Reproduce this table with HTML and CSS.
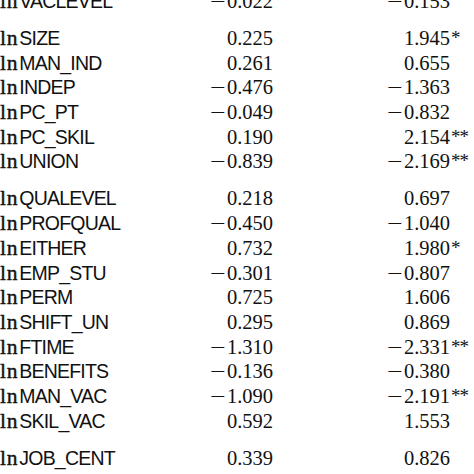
FILE: index.html
```html
<!DOCTYPE html>
<html>
<head>
<meta charset="utf-8">
<link rel="stylesheet" href="styles.css">
</head>
<body>
<div class="table">
  <div class="group first">
    <div class="row"><span class="lab"><span class="ln">ln</span>VACLEVEL</span><span class="num"><span class="m">−</span>0.022</span><span class="num"><span class="m">−</span>0.153</span><span class="st"></span></div>
  </div>
  <div class="group">
    <div class="row"><span class="lab"><span class="ln">ln</span>SIZE</span><span class="num">0.225</span><span class="num">1.945</span><span class="st">*</span></div>
    <div class="row"><span class="lab"><span class="ln">ln</span>MAN_IND</span><span class="num">0.261</span><span class="num">0.655</span><span class="st"></span></div>
    <div class="row"><span class="lab"><span class="ln">ln</span>INDEP</span><span class="num"><span class="m">−</span>0.476</span><span class="num"><span class="m">−</span>1.363</span><span class="st"></span></div>
    <div class="row"><span class="lab"><span class="ln">ln</span>PC_PT</span><span class="num"><span class="m">−</span>0.049</span><span class="num"><span class="m">−</span>0.832</span><span class="st"></span></div>
    <div class="row"><span class="lab"><span class="ln">ln</span>PC_SKIL</span><span class="num">0.190</span><span class="num">2.154</span><span class="st">**</span></div>
    <div class="row"><span class="lab"><span class="ln">ln</span>UNION</span><span class="num"><span class="m">−</span>0.839</span><span class="num"><span class="m">−</span>2.169</span><span class="st">**</span></div>
  </div>
  <div class="group">
    <div class="row"><span class="lab"><span class="ln">ln</span>QUALEVEL</span><span class="num">0.218</span><span class="num">0.697</span><span class="st"></span></div>
    <div class="row"><span class="lab"><span class="ln">ln</span>PROFQUAL</span><span class="num"><span class="m">−</span>0.450</span><span class="num"><span class="m">−</span>1.040</span><span class="st"></span></div>
    <div class="row"><span class="lab"><span class="ln">ln</span>EITHER</span><span class="num">0.732</span><span class="num">1.980</span><span class="st">*</span></div>
    <div class="row"><span class="lab"><span class="ln">ln</span>EMP_STU</span><span class="num"><span class="m">−</span>0.301</span><span class="num"><span class="m">−</span>0.807</span><span class="st"></span></div>
    <div class="row"><span class="lab"><span class="ln">ln</span>PERM</span><span class="num">0.725</span><span class="num">1.606</span><span class="st"></span></div>
    <div class="row"><span class="lab"><span class="ln">ln</span>SHIFT_UN</span><span class="num">0.295</span><span class="num">0.869</span><span class="st"></span></div>
    <div class="row"><span class="lab"><span class="ln">ln</span>FTIME</span><span class="num"><span class="m">−</span>1.310</span><span class="num"><span class="m">−</span>2.331</span><span class="st">**</span></div>
    <div class="row"><span class="lab"><span class="ln">ln</span>BENEFITS</span><span class="num"><span class="m">−</span>0.136</span><span class="num"><span class="m">−</span>0.380</span><span class="st"></span></div>
    <div class="row"><span class="lab"><span class="ln">ln</span>MAN_VAC</span><span class="num"><span class="m">−</span>1.090</span><span class="num"><span class="m">−</span>2.191</span><span class="st">**</span></div>
    <div class="row"><span class="lab"><span class="ln">ln</span>SKIL_VAC</span><span class="num">0.592</span><span class="num">1.553</span><span class="st"></span></div>
  </div>
  <div class="group">
    <div class="row"><span class="lab"><span class="ln">ln</span>JOB_CENT</span><span class="num">0.339</span><span class="num">0.826</span><span class="st"></span></div>
  </div>
</div>
</body>
</html>
```

FILE: styles.css
```css
html, body {
  margin: 0;
  padding: 0;
  background: #ffffff;
  overflow: hidden;
}
body {
  width: 474px;
  height: 474px;
  color: #111111;
}
.table {
  display: flex;
  flex-direction: column;
  gap: 12.4px;
  margin-top: -11px;
}
.row {
  display: grid;
  grid-template-columns: 200px 73px 177px 1fr;
  height: 24.68px;
  line-height: 24.68px;
  white-space: nowrap;
}
.lab {
  font-family: "Liberation Sans", Arial, sans-serif;
  font-size: 19.5px;
  letter-spacing: -0.8px;
}
.ln {
  font-family: "Liberation Serif", "Times New Roman", serif;
  font-size: 21.5px;
  letter-spacing: 0.8px;
  margin-right: 1px;
  -webkit-text-stroke: 0.4px #111111;
}
.num {
  font-family: "Liberation Serif", "Times New Roman", serif;
  font-size: 20.5px;
  text-align: right;
}
.m {
  display: inline-block;
  width: 17px;
  text-align: left;
  transform: scaleX(1.35);
  transform-origin: left center;
}
.st {
  font-family: "Liberation Serif", "Times New Roman", serif;
  font-size: 19px;
  letter-spacing: -1px;
  padding-left: 1px;
}
```
